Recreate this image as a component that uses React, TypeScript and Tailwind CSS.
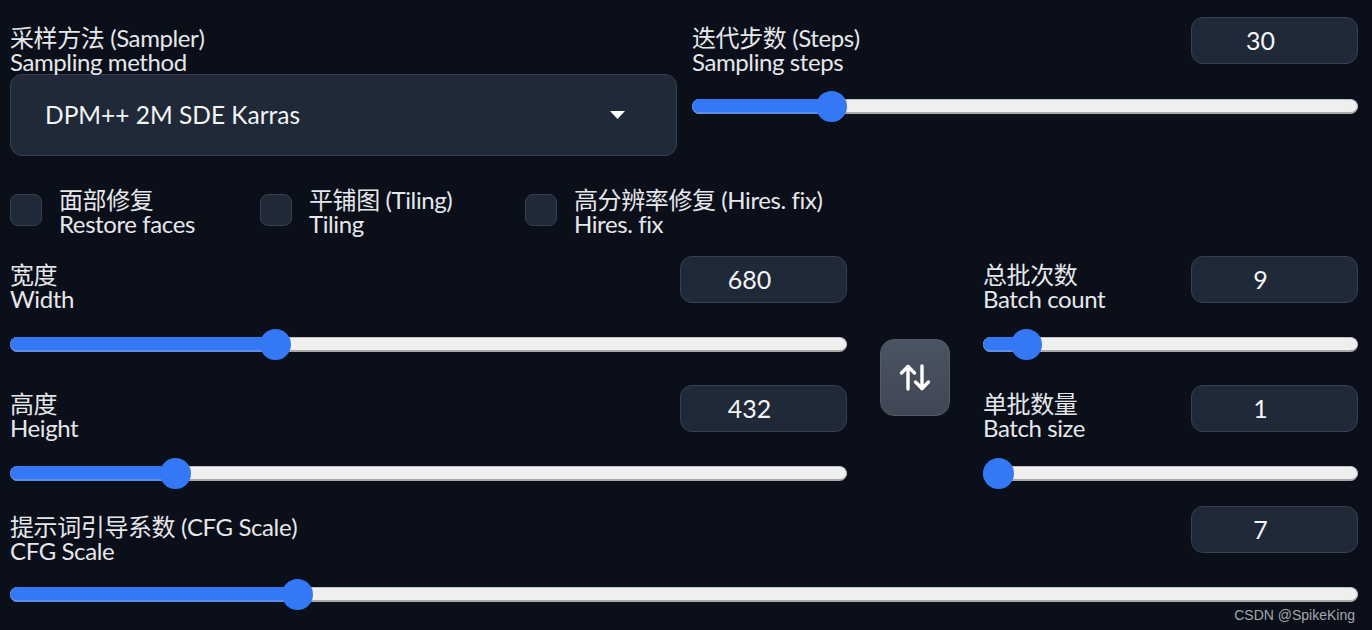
const FONT = "font-['Lato','Noto_Sans_CJK_SC',sans-serif]";

type SliderProps = { min: number; max: number; value: number };

const Slider = ({ min, max, value }: SliderProps) => {
  const pct = (value - min) / (max - min);
  return (
    <div className="relative h-[31px] w-full">
      <div className="absolute left-0 right-0 top-[8px] h-[15px] rounded-full border border-[#c2c2c2] border-b-2 border-b-[#a9a9a9] bg-[#efefef]" />
      <div
        className="absolute left-0 top-[8px] h-[15px] rounded-l-full bg-[#3478f6] border-b-2 border-b-[#5f8fe6]"
        style={{ width: `calc(${pct} * (100% - 31px) + 15.5px)` }}
      />
      <div
        className="absolute top-0 h-[31px] w-[31px] rounded-full bg-[#3478f6]"
        style={{ left: `calc(${pct} * (100% - 31px))` }}
      />
    </div>
  );
};

const NumBox = ({ value }: { value: number }) => (
  <div className="flex h-[47px] w-[167px] shrink-0 items-center justify-center rounded-[12px] border border-[#374151] bg-[#1f2937] pr-[28px] text-[25px] text-[#f3f4f6]">
    {value}
  </div>
);

const Label = ({ zh, en, className = '' }: { zh: string; en: string; className?: string }) => (
  <div className={`text-[24px] leading-[24px] tracking-[-0.4px] text-[#e5e7eb] ${className}`}>
    <div className="whitespace-nowrap">{zh}</div>
    <div className="whitespace-nowrap">{en}</div>
  </div>
);

const SliderBlock = ({
  zh,
  en,
  min,
  max,
  value,
  labelTop,
  headH,
  sliderH,
}: {
  zh: string;
  en: string;
  min: number;
  max: number;
  value: number;
  labelTop: string;
  headH: string;
  sliderH: string;
}) => (
  <div className="flex flex-col">
    <div className={`flex items-start justify-between ${headH}`}>
      <Label zh={zh} en={en} className={labelTop} />
      <NumBox value={value} />
    </div>
    <div className={`flex items-center ${sliderH}`}>
      <Slider min={min} max={max} value={value} />
    </div>
  </div>
);

const Check = ({ zh, en, width }: { zh: string; en: string; width: string }) => (
  <div className={`flex items-start gap-[17px] ${width}`}>
    <div className="mt-[6px] h-[32px] w-[32px] shrink-0 rounded-[8px] border border-[#374151] bg-[#1f2937]" />
    <Label zh={zh} en={en} />
  </div>
);

const SwapIcon = () => (
  <svg width="32" height="27" viewBox="0 0 32 27" fill="none" stroke="white" strokeWidth="3.4" strokeLinecap="round" strokeLinejoin="round">
    <path d="M9 25V2.5" />
    <path d="M2.5 9L9 2.5L15.5 9" />
    <path d="M23 2V24.5" />
    <path d="M16.5 18L23 24.5L29.5 18" />
  </svg>
);

export default function App() {
  return (
    <div className={`relative h-[630px] w-[1372px] overflow-hidden bg-[#0b0f19] pl-[10px] pr-[14px] pt-[17px] ${FONT}`}>
      {/* sampler + steps */}
      <div className="flex gap-[15px]">
        <div className="w-[667px] pt-[9px]">
          <Label zh="采样方法 (Sampler)" en="Sampling method" />
          <div className="flex h-[82px] items-center justify-between rounded-[12px] border border-[#374151] bg-[#1f2937] pl-[34px] pr-[51px] text-[24.5px] text-[#f3f4f6]">
            <span>DPM++ 2M SDE Karras</span>
            <svg width="15" height="8" viewBox="0 0 15 8">
              <path d="M0 0H15L7.5 8Z" fill="white" />
            </svg>
          </div>
        </div>
        <div className="flex-1">
          <SliderBlock
            zh="迭代步数 (Steps)"
            en="Sampling steps"
            min={1}
            max={150}
            value={30}
            labelTop="mt-[9px]"
            headH="h-[57px]"
            sliderH="h-[64px]"
          />
        </div>
      </div>

      {/* checkboxes */}
      <div className="mt-[32px] flex">
        <Check zh="面部修复" en="Restore faces" width="w-[250px]" />
        <Check zh="平铺图 (Tiling)" en="Tiling" width="w-[265px]" />
        <Check zh="高分辨率修复 (Hires. fix)" en="Hires. fix" width="w-[330px]" />
      </div>

      {/* width/height + batch */}
      <div className="mt-[20px] flex">
        <div className="flex w-[837px] flex-col gap-[8px]">
          <SliderBlock zh="宽度" en="Width" min={64} max={2048} value={680} labelTop="mt-[7px]" headH="h-[55px]" sliderH="h-[66px]" />
          <SliderBlock zh="高度" en="Height" min={64} max={2048} value={432} labelTop="mt-[7px]" headH="h-[55px]" sliderH="h-[66px]" />
        </div>
        <div className="mx-[33px] flex w-[70px] items-center pb-[7px]">
          <button className="flex h-[77px] w-[70px] items-center justify-center rounded-[14px] border border-[#535b69] bg-gradient-to-b from-[#4b5462] to-[#3f4654]">
            <SwapIcon />
          </button>
        </div>
        <div className="flex w-[375px] flex-col gap-[8px]">
          <SliderBlock zh="总批次数" en="Batch count" min={1} max={100} value={9} labelTop="mt-[7px]" headH="h-[55px]" sliderH="h-[66px]" />
          <SliderBlock zh="单批数量" en="Batch size" min={1} max={8} value={1} labelTop="mt-[7px]" headH="h-[55px]" sliderH="h-[66px]" />
        </div>
      </div>

      {/* cfg */}
      <SliderBlock
        zh="提示词引导系数 (CFG Scale)"
        en="CFG Scale"
        min={1}
        max={30}
        value={7}
        labelTop="mt-[9px]"
        headH="h-[57px]"
        sliderH="h-[62px]"
      />

      <div className="absolute bottom-[8px] right-[17px] font-['Liberation_Sans',Arial,sans-serif] text-[14px] leading-none text-[#a3a7ae]">
        CSDN @SpikeKing
      </div>
    </div>
  );
}
